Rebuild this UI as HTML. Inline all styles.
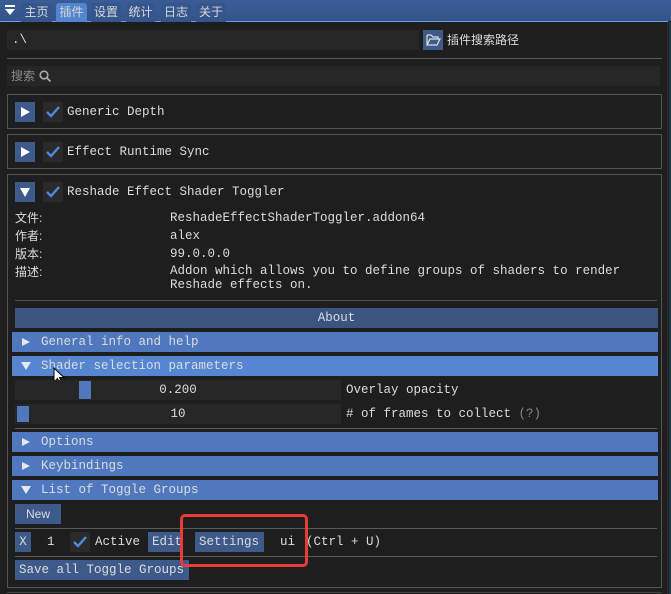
<!DOCTYPE html>
<html><head><meta charset="utf-8"><style>
*{margin:0;padding:0;box-sizing:border-box}
body{width:671px;height:594px;background:#1e1e1e;position:relative;overflow:hidden;font-family:"Liberation Mono",monospace;font-size:12.5px;color:#dcdcdc}
.a{position:absolute}
.cj{font-family:"Liberation Sans","Noto Sans CJK SC",sans-serif;font-size:12px}
.t{line-height:21px;white-space:pre}
.tab{position:absolute;top:3px;height:19px;background:#35568c;border-radius:3px 3px 0 0;color:#d8d8d8;line-height:19px;text-align:center}
.btn{background:#3d5a8a}
.cb{background:#2a2a2a}
.hdr{position:absolute;left:12px;width:646px;height:20px;background:#4f78be;line-height:21px;white-space:pre;padding-left:29px}
.hdr svg{position:absolute;left:9px;top:5px}
.line{position:absolute;height:1px;background:#4f4f4f}
.box{position:absolute;left:7px;width:655px;border:1px solid #555}
</style></head><body>
<div class="a" style="left:0;top:0;width:671px;height:21px;background:linear-gradient(#3a5c96,#34548a)"></div>
<div class="a" style="left:0;top:21px;width:668px;height:1px;background:#6c9ae0"></div>
<svg class="a" style="left:5px;top:5px" width="10" height="12"><rect x="0" y="0" width="10" height="2" fill="#fff"/><path d="M0 4 L10 4 L5 10 Z" fill="#fff"/></svg>
<div class="tab cj" style="left:21px;width:31px">主页</div>
<div class="tab cj" style="left:56px;width:31px;background:#5284cf">插件</div>
<div class="tab cj" style="left:91px;width:30px">设置</div>
<div class="tab cj" style="left:126px;width:29px">统计</div>
<div class="tab cj" style="left:161px;width:30px">日志</div>
<div class="tab cj" style="left:196px;width:30px">关于</div>

<div class="a t" style="left:7px;top:30px;width:412px;height:20px;background:#262626;padding-left:5px">.\</div>
<div class="a btn" style="left:423px;top:30px;width:20px;height:20px"></div>
<svg class="a" style="left:425px;top:33px" width="16" height="14"><path d="M2 2 H6 L8 4 H13 V6 M2 2 V12 H12 L15 6 H5 L2 12" fill="none" stroke="#e0e0e0" stroke-width="1.2"/></svg>
<div class="a t cj" style="left:447px;top:30px">插件搜索路径</div>
<div class="line" style="left:7px;top:58px;width:655px;background:#5a5a5a"></div>
<div class="a t" style="left:7px;top:66px;width:653px;height:20px;background:#262626"></div>
<div class="a t cj" style="left:11px;top:66px;color:#8a8a8a">搜索</div>
<svg class="a" style="left:39px;top:70px" width="13" height="13"><circle cx="5" cy="5" r="3.8" fill="none" stroke="#a8a8a8" stroke-width="1.6"/><path d="M8 8 L11.5 11.5" stroke="#a8a8a8" stroke-width="1.8"/></svg>

<div class="box" style="top:94px;height:35px"></div>
<div class="box" style="top:134px;height:35px"></div>
<div class="box" style="top:174px;height:414px"></div>
<div class="line" style="left:7px;top:592px;width:655px;background:#444"></div>

<div class="a btn" style="left:15px;top:102px;width:20px;height:20px"></div>
<svg class="a" style="left:20px;top:106px" width="12" height="12"><path d="M1 1 L10 6 L1 11Z" fill="#fff"/></svg>
<div class="a cb" style="left:43px;top:102px;width:20px;height:20px"></div>
<svg class="a" style="left:45px;top:105px" width="16" height="14"><path d="M2 7 L6 11 L14 2" fill="none" stroke="#4f8ae0" stroke-width="2.4"/></svg>
<div class="a t" style="left:67px;top:102px">Generic Depth</div>

<div class="a btn" style="left:15px;top:142px;width:20px;height:20px"></div>
<svg class="a" style="left:20px;top:146px" width="12" height="12"><path d="M1 1 L10 6 L1 11Z" fill="#fff"/></svg>
<div class="a cb" style="left:43px;top:142px;width:20px;height:20px"></div>
<svg class="a" style="left:45px;top:145px" width="16" height="14"><path d="M2 7 L6 11 L14 2" fill="none" stroke="#4f8ae0" stroke-width="2.4"/></svg>
<div class="a t" style="left:67px;top:142px">Effect Runtime Sync</div>

<div class="a btn" style="left:15px;top:182px;width:20px;height:20px"></div>
<svg class="a" style="left:19px;top:187px" width="12" height="12"><path d="M1 1 L11 1 L6 10Z" fill="#fff"/></svg>
<div class="a cb" style="left:43px;top:182px;width:20px;height:20px"></div>
<svg class="a" style="left:45px;top:185px" width="16" height="14"><path d="M2 7 L6 11 L14 2" fill="none" stroke="#4f8ae0" stroke-width="2.4"/></svg>
<div class="a t" style="left:67px;top:182px">Reshade Effect Shader Toggler</div>

<div class="a cj" style="left:15px;top:209px;line-height:18px">文件:<br>作者:<br>版本:<br>描述:</div>
<div class="a" style="left:170px;top:209px;line-height:18px;white-space:pre">ReshadeEffectShaderToggler.addon64
alex
99.0.0.0</div>
<div class="a" style="left:170px;top:264px;line-height:14px;white-space:pre">Addon which allows you to define groups of shaders to render
Reshade effects on.</div>
<div class="line" style="left:15px;top:300px;width:642px"></div>

<div class="a t" style="left:15px;top:308px;width:643px;height:20px;background:#3b5580;text-align:center">About</div>
<div class="hdr" style="top:332px"><svg width="10" height="10"><path d="M1 1 L9 5 L1 9Z" fill="#e8e8e8"/></svg>General info and help</div>
<div class="hdr" style="top:356px;background:#5685d2"><svg width="10" height="10"><path d="M0 1 L10 1 L5 9Z" fill="#e8e8e8"/></svg>Shader selection parameters</div>
<svg class="a" style="left:53px;top:367px" width="14" height="20"><path d="M1 1 L1 15 L4.5 11.5 L7 17 L9 16 L6.5 10.5 L11 10.5 Z" fill="#fff" stroke="#000" stroke-width="1"/></svg>

<div class="a t" style="left:15px;top:380px;width:326px;height:20px;background:#262626;text-align:center">0.200</div>
<div class="a" style="left:79px;top:381px;width:12px;height:18px;background:#4f78be"></div>
<div class="a t" style="left:346px;top:380px">Overlay opacity</div>
<div class="a t" style="left:15px;top:404px;width:326px;height:20px;background:#262626;text-align:center">10</div>
<div class="a" style="left:17px;top:406px;width:12px;height:16px;background:#4f78be"></div>
<div class="a t" style="left:346px;top:404px"># of frames to collect <span style="color:#888">(?)</span></div>
<div class="line" style="left:15px;top:428px;width:642px;background:#5a5a5a"></div>

<div class="hdr" style="top:432px"><svg width="10" height="10"><path d="M1 1 L9 5 L1 9Z" fill="#e8e8e8"/></svg>Options</div>
<div class="hdr" style="top:456px"><svg width="10" height="10"><path d="M1 1 L9 5 L1 9Z" fill="#e8e8e8"/></svg>Keybindings</div>
<div class="hdr" style="top:480px"><svg width="10" height="10"><path d="M0 1 L10 1 L5 9Z" fill="#e8e8e8"/></svg>List of Toggle Groups</div>

<div class="a btn cj" style="left:15px;top:504px;width:46px;height:20px;line-height:21px;text-align:center">New</div>
<div class="line" style="left:15px;top:528px;width:642px;background:#5a5a5a"></div>
<div class="a btn t" style="left:15px;top:532px;width:16px;height:20px;text-align:center">X</div>
<div class="a t" style="left:47px;top:532px">1</div>
<div class="a cb" style="left:70px;top:532px;width:20px;height:20px"></div>
<svg class="a" style="left:72px;top:535px" width="16" height="14"><path d="M2 7 L6 11 L14 2" fill="none" stroke="#4f8ae0" stroke-width="2.4"/></svg>
<div class="a t" style="left:95px;top:532px">Active</div>
<div class="a btn t" style="left:148px;top:532px;width:35px;height:20px;padding-left:4px">Edit</div>
<div class="a btn t" style="left:195px;top:532px;width:69px;height:20px;padding-left:4px">Settings</div>
<div class="a t" style="left:280px;top:532px">ui</div>
<div class="a t" style="left:306px;top:532px">(Ctrl + U)</div>
<div class="line" style="left:15px;top:556px;width:642px;background:#5a5a5a"></div>
<div class="a btn t" style="left:15px;top:560px;width:174px;height:20px;padding-left:4px">Save all Toggle Groups</div>

<div class="a" style="left:180px;top:514px;width:128px;height:53px;border:3px solid #ea3a3a;border-radius:5px"></div>

<div class="a" style="left:667px;top:22px;width:1px;height:572px;background:#2e2e2e"></div>
<div class="a" style="left:669px;top:22px;width:2px;height:572px;background:#1a3a44"></div>
</body></html>
